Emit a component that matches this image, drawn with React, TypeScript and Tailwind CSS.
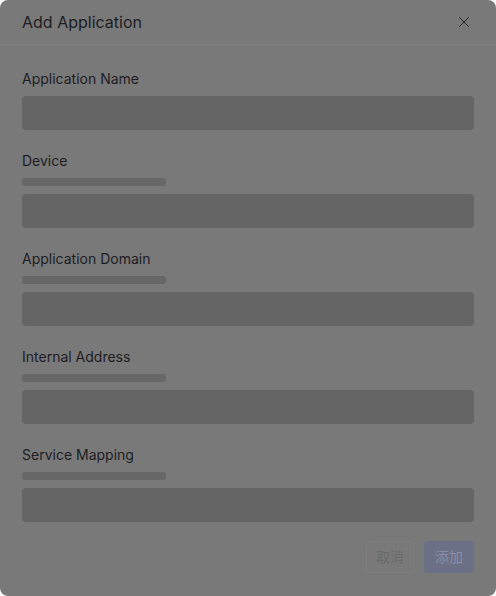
import { X } from "lucide-react";

type FieldProps = {
  label: string;
  hint?: boolean;
};

function Field({ label, hint = true }: FieldProps) {
  return (
    <div className="flex flex-col">
      <label className="text-sm leading-5 text-[#1d1d24]">{label}</label>
      {hint && <div className="mt-[7px] h-2 w-[144px] rounded-[3px] bg-[#676767]" />}
      <div className={`${hint ? "mt-2" : "mt-[7px]"} h-[34px] w-full rounded-[4px] bg-[#656565]`} />
    </div>
  );
}

export default function App() {
  return (
    <div className="h-[596px] w-[496px] bg-white" style={{ fontFamily: "Inter, 'Noto Sans CJK SC', sans-serif" }}>
      <div className="flex h-full w-full flex-col overflow-hidden rounded-lg bg-[#797979]">
        <div className="flex h-[45px] shrink-0 items-center justify-between border-b border-[#7f7f7f] pl-[22px] pr-[23px]">
          <h2 className="text-base text-[#1d1d24]">Add Application</h2>
          <X className="size-[18px] text-[#22222a]" strokeWidth={1.3} />
        </div>
        <div className="flex flex-col gap-[21px] px-[22px] pt-[24px]">
          <Field label="Application Name" hint={false} />
          <Field label="Device" />
          <Field label="Application Domain" />
          <Field label="Internal Address" />
          <Field label="Service Mapping" />
        </div>
        <div className="mt-[19px] flex justify-end gap-[10px] px-[22px]">
          <button className="h-8 w-12 rounded-[4px] border border-[#7e7e7e] text-sm text-[#6a6a6a]">取消</button>
          <button className="h-8 w-[50px] rounded-[4px] bg-[#6b7087] text-sm text-[#8a8fa6]">添加</button>
        </div>
      </div>
    </div>
  );
}
